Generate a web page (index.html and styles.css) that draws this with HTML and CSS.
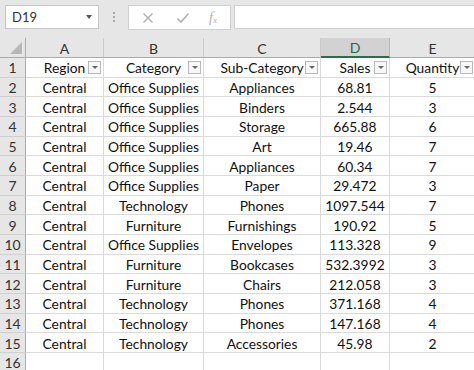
FILE: index.html
```html
<!DOCTYPE html>
<html>
<head>
<meta charset="utf-8">
<link rel="stylesheet" href="styles.css">
</head>
<body>
<div class="app">
  <div class="fbar">
    <div class="namebox"><span class="nb-text">D19</span><span class="nb-arrow"></span></div>
    <div class="grip"><i></i><i></i><i></i></div>
    <div class="fxbox">
      <svg class="ic" width="12" height="12" viewBox="0 0 12 12"><path d="M1.5 1.5 L10.5 10.5 M10.5 1.5 L1.5 10.5" stroke="#b3b3b3" stroke-width="1.5" fill="none"/></svg>
      <svg class="ic" width="14" height="12" viewBox="0 0 14 12"><path d="M1.5 6.5 L5 10 L12.5 1.5" stroke="#b3b3b3" stroke-width="1.7" fill="none"/></svg>
      <span class="fx">f<sub>x</sub></span>
    </div>
    <div class="finput"></div>
  </div>
  <div class="sheet">
    <div class="corner"><span class="tri"></span></div>
    <div class="ch">A</div><div class="ch">B</div><div class="ch">C</div><div class="ch sel">D</div><div class="ch">E</div>

    <div class="rh">1</div>
    <div class="c hd">Region<span class="flt"></span></div>
    <div class="c hd">Category<span class="flt"></span></div>
    <div class="c hd">Sub-Category<span class="flt"></span></div>
    <div class="c hd">Sales<span class="flt"></span></div>
    <div class="c hd">Quantity<span class="flt"></span></div>

    <div class="rh">2</div><div class="c">Central</div><div class="c">Office Supplies</div><div class="c">Appliances</div><div class="c">68.81</div><div class="c">5</div>
    <div class="rh">3</div><div class="c">Central</div><div class="c">Office Supplies</div><div class="c">Binders</div><div class="c">2.544</div><div class="c">3</div>
    <div class="rh">4</div><div class="c">Central</div><div class="c">Office Supplies</div><div class="c">Storage</div><div class="c">665.88</div><div class="c">6</div>
    <div class="rh">5</div><div class="c">Central</div><div class="c">Office Supplies</div><div class="c">Art</div><div class="c">19.46</div><div class="c">7</div>
    <div class="rh">6</div><div class="c">Central</div><div class="c">Office Supplies</div><div class="c">Appliances</div><div class="c">60.34</div><div class="c">7</div>
    <div class="rh">7</div><div class="c">Central</div><div class="c">Office Supplies</div><div class="c">Paper</div><div class="c">29.472</div><div class="c">3</div>
    <div class="rh">8</div><div class="c">Central</div><div class="c">Technology</div><div class="c">Phones</div><div class="c">1097.544</div><div class="c">7</div>
    <div class="rh">9</div><div class="c">Central</div><div class="c">Furniture</div><div class="c">Furnishings</div><div class="c">190.92</div><div class="c">5</div>
    <div class="rh">10</div><div class="c">Central</div><div class="c">Office Supplies</div><div class="c">Envelopes</div><div class="c">113.328</div><div class="c">9</div>
    <div class="rh">11</div><div class="c">Central</div><div class="c">Furniture</div><div class="c">Bookcases</div><div class="c">532.3992</div><div class="c">3</div>
    <div class="rh">12</div><div class="c">Central</div><div class="c">Furniture</div><div class="c">Chairs</div><div class="c">212.058</div><div class="c">3</div>
    <div class="rh">13</div><div class="c">Central</div><div class="c">Technology</div><div class="c">Phones</div><div class="c">371.168</div><div class="c">4</div>
    <div class="rh">14</div><div class="c">Central</div><div class="c">Technology</div><div class="c">Phones</div><div class="c">147.168</div><div class="c">4</div>
    <div class="rh">15</div><div class="c">Central</div><div class="c">Technology</div><div class="c">Accessories</div><div class="c">45.98</div><div class="c">2</div>
    <div class="rh">16</div><div class="c"></div><div class="c"></div><div class="c"></div><div class="c"></div><div class="c"></div>
  </div>
</div>
</body>
</html>
```

FILE: styles.css
```css
* { box-sizing: border-box; }
html, body { margin: 0; padding: 0; }
body {
  width: 474px;
  height: 370px;
  overflow: hidden;
  background: #ffffff;
  font-family: Lato, "Liberation Sans", sans-serif;
}
.app { width: 476px; }

.fbar {
  height: 38px;
  background: #e6e6e6;
  display: flex;
  align-items: flex-start;
  padding: 5px 0 0 5px;
}
.namebox {
  width: 94px;
  height: 24px;
  background: #fff;
  border: 1px solid #c6c6c6;
  display: flex;
  align-items: center;
  justify-content: space-between;
  padding: 0 6px 0 6px;
  font-size: 13px;
  color: #333;
}
.nb-arrow {
  width: 0; height: 0;
  border-left: 3.5px solid transparent;
  border-right: 3.5px solid transparent;
  border-top: 4px solid #555;
}
.grip {
  width: 29px;
  height: 24px;
  display: flex;
  flex-direction: column;
  align-items: center;
  justify-content: center;
  gap: 2px;
}
.grip i {
  display: block;
  width: 2px; height: 2px;
  background: #a8a8a8;
}
.fxbox {
  width: 103px;
  height: 25px;
  background: #fff;
  border: 1px solid #d0d0d0;
  display: flex;
  align-items: center;
  padding-left: 13px;
  gap: 22px;
}
.fx {
  font-family: "Liberation Serif", serif;
  font-style: italic;
  font-size: 14px;
  color: #b0b0b0;
  margin-left: -3px;
}
.fx sub { font-size: 9px; vertical-align: -1px; }
.finput {
  flex: 1;
  height: 24px;
  margin-left: 3px;
  background: #fff;
  border: 1px solid #d0d0d0;
  border-right: none;
}

.sheet {
  display: grid;
  grid-template-columns: 26px 78px 100px 117px 69px 86px;
  grid-template-rows: 20px;
  grid-auto-rows: 19.667px;
  font-size: 13.8px;
  color: #111;
}
.corner {
  background: #e6e6e6;
  border-right: 1px solid #ababab;
  border-bottom: 1px solid #ababab;
  position: relative;
}
.tri {
  position: absolute;
  right: 3px;
  bottom: 3px;
  width: 0; height: 0;
  border-left: 12px solid transparent;
  border-bottom: 12px solid #b7b7b7;
}
.ch {
  background: #e6e6e6;
  border-right: 1px solid #cacaca;
  border-bottom: 1px solid #ababab;
  display: flex;
  align-items: center;
  justify-content: center;
  color: #333;
  font-size: 14px;
  padding-top: 1px;
}
.ch.sel {
  background: #d2d2d2;
  color: #1e6b3f;
  border-bottom: 2px solid #217346;
  border-right-color: #b9b9b9;
}
.rh {
  background: #e6e6e6;
  border-right: 1px solid #ababab;
  border-bottom: 1px solid #cfcfcf;
  display: flex;
  align-items: center;
  justify-content: center;
  color: #333;
  font-size: 14px;
  padding-top: 1px;
}
.c {
  border-right: 1px solid #dadada;
  border-bottom: 1px solid #dadada;
  display: flex;
  align-items: center;
  justify-content: center;
  white-space: nowrap;
  padding-top: 1px;
}
.hd { position: relative; }
.flt {
  position: absolute;
  right: 2px;
  bottom: 3px;
  width: 13px;
  height: 13px;
  border: 1px solid #b9b9b9;
  background: #f7f7f7;
  display: flex;
  align-items: center;
  justify-content: center;
}
.flt::after {
  content: "";
  width: 0; height: 0;
  border-left: 3px solid transparent;
  border-right: 3px solid transparent;
  border-top: 3px solid #666;
}
```
